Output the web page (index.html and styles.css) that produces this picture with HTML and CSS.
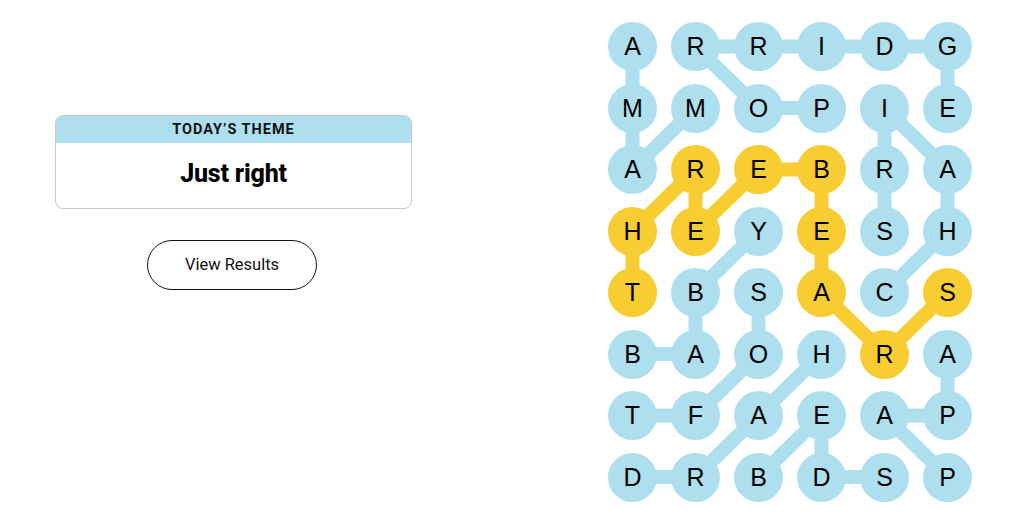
FILE: index.html
```html
<!DOCTYPE html>
<html lang="en">
<head>
<meta charset="utf-8">
<title>Strands</title>
<link rel="stylesheet" href="styles.css">
</head>
<body>
<main class="page">
  <section class="info">
    <div class="theme-card">
      <div class="theme-head">TODAY’S THEME</div>
      <div class="theme-body">Just right</div>
    </div>
    <button class="results-btn" type="button">View Results</button>
  </section>
  <section class="board">
    <svg class="links" width="364" height="480" viewBox="0 0 364 480" aria-hidden="true">
      <g class="blue" stroke="#aedfee" stroke-width="14" stroke-linecap="round">
        <!-- MAMA -->
        <line x1="87.5" y1="86" x2="24.5" y2="147.5"/>
        <line x1="24.5" y1="147.5" x2="24.5" y2="86"/>
        <line x1="24.5" y1="86" x2="24.5" y2="24.5"/>
        <!-- PORRIDGE -->
        <line x1="213.5" y1="86" x2="150.5" y2="86"/>
        <line x1="150.5" y1="86" x2="87.5" y2="24.5"/>
        <line x1="87.5" y1="24.5" x2="339.5" y2="24.5"/>
        <line x1="339.5" y1="24.5" x2="339.5" y2="86"/>
        <!-- CHAIRS -->
        <line x1="276.5" y1="270.5" x2="339.5" y2="209"/>
        <line x1="339.5" y1="209" x2="339.5" y2="147.5"/>
        <line x1="339.5" y1="147.5" x2="276.5" y2="86"/>
        <line x1="276.5" y1="86" x2="276.5" y2="209"/>
        <!-- BABY -->
        <line x1="24.5" y1="332" x2="87.5" y2="332"/>
        <line x1="87.5" y1="332" x2="87.5" y2="270.5"/>
        <line x1="87.5" y1="270.5" x2="150.5" y2="209"/>
        <!-- SOFT -->
        <line x1="150.5" y1="270.5" x2="150.5" y2="332"/>
        <line x1="150.5" y1="332" x2="87.5" y2="393.5"/>
        <line x1="87.5" y1="393.5" x2="24.5" y2="393.5"/>
        <!-- HARD -->
        <line x1="213.5" y1="332" x2="150.5" y2="393.5"/>
        <line x1="150.5" y1="393.5" x2="87.5" y2="455"/>
        <line x1="87.5" y1="455" x2="24.5" y2="455"/>
        <!-- BEDS -->
        <line x1="150.5" y1="455" x2="213.5" y2="393.5"/>
        <line x1="213.5" y1="393.5" x2="213.5" y2="455"/>
        <line x1="213.5" y1="455" x2="276.5" y2="455"/>
        <!-- PAPA -->
        <line x1="339.5" y1="455" x2="276.5" y2="393.5"/>
        <line x1="276.5" y1="393.5" x2="339.5" y2="393.5"/>
        <line x1="339.5" y1="393.5" x2="339.5" y2="332"/>
      </g>
      <g class="yellow" stroke="#f8cd32" stroke-width="14" stroke-linecap="round">
        <!-- THREEBEARS -->
        <line x1="24.5" y1="270.5" x2="24.5" y2="209"/>
        <line x1="24.5" y1="209" x2="87.5" y2="147.5"/>
        <line x1="87.5" y1="147.5" x2="87.5" y2="209"/>
        <line x1="87.5" y1="209" x2="150.5" y2="147.5"/>
        <line x1="150.5" y1="147.5" x2="213.5" y2="147.5"/>
        <line x1="213.5" y1="147.5" x2="213.5" y2="270.5"/>
        <line x1="213.5" y1="270.5" x2="276.5" y2="332"/>
        <line x1="276.5" y1="332" x2="339.5" y2="270.5"/>
      </g>
    </svg>
    <div class="grid">
      <span class="cell found">A</span><span class="cell found">R</span><span class="cell found">R</span><span class="cell found">I</span><span class="cell found">D</span><span class="cell found">G</span>
      <span class="cell found">M</span><span class="cell found">M</span><span class="cell found">O</span><span class="cell found">P</span><span class="cell found">I</span><span class="cell found">E</span>
      <span class="cell found">A</span><span class="cell span">R</span><span class="cell span">E</span><span class="cell span">B</span><span class="cell found">R</span><span class="cell found">A</span>
      <span class="cell span">H</span><span class="cell span">E</span><span class="cell found">Y</span><span class="cell span">E</span><span class="cell found">S</span><span class="cell found">H</span>
      <span class="cell span">T</span><span class="cell found">B</span><span class="cell found">S</span><span class="cell span">A</span><span class="cell found">C</span><span class="cell span">S</span>
      <span class="cell found">B</span><span class="cell found">A</span><span class="cell found">O</span><span class="cell found">H</span><span class="cell span">R</span><span class="cell found">A</span>
      <span class="cell found">T</span><span class="cell found">F</span><span class="cell found">A</span><span class="cell found">E</span><span class="cell found">A</span><span class="cell found">P</span>
      <span class="cell found">D</span><span class="cell found">R</span><span class="cell found">B</span><span class="cell found">D</span><span class="cell found">S</span><span class="cell found">P</span>
    </div>
  </section>
</main>
</body>
</html>
```
FILE: styles.css
```css
* { box-sizing: border-box; }

html, body {
  margin: 0;
  padding: 0;
  background: #ffffff;
  color: #000000;
  font-family: Roboto, "Liberation Sans", Arial, sans-serif;
}

.page {
  display: flex;
  align-items: flex-start;
  gap: 196px;
  padding-left: 55px;
  width: 1024px;
  height: 532px;
  overflow: hidden;
}

.info {
  width: 357px;
  padding-top: 115px;
  display: flex;
  flex-direction: column;
  align-items: center;
}

.theme-card {
  width: 357px;
  border: 1px solid #c9c9c9;
  border-radius: 8px;
  overflow: hidden;
}

.theme-head {
  height: 27px;
  background: #aedfee;
  display: flex;
  align-items: center;
  justify-content: center;
  font-size: 14.5px;
  font-weight: 700;
  letter-spacing: 1px;
  color: #121212;
}

.theme-body {
  height: 65px;
  display: flex;
  align-items: center;
  justify-content: center;
  font-size: 25px;
  font-weight: 800;
  letter-spacing: -0.2px;
  padding-bottom: 4px;
}

.results-btn {
  margin-top: 31px;
  margin-right: 3px;
  width: 170px;
  height: 50px;
  border: 1px solid #121212;
  border-radius: 25px;
  background: #ffffff;
  font-family: Roboto, "Liberation Sans", Arial, sans-serif;
  font-size: 16.5px;
  color: #121212;
  padding: 0 0 2px;
}

.board {
  position: relative;
  margin-top: 22px;
  width: 364px;
  height: 480px;
}

.links {
  position: absolute;
  left: 0;
  top: 0;
}

.grid {
  position: relative;
  display: grid;
  grid-template-columns: repeat(6, 49px);
  grid-auto-rows: 49px;
  column-gap: 14px;
  row-gap: 12.5px;
}

.cell {
  width: 49px;
  height: 49px;
  border-radius: 50%;
  display: flex;
  align-items: center;
  justify-content: center;
  font-family: "Liberation Sans", Arial, sans-serif;
  font-size: 25px;
  color: #000000;
}

.cell.found { background: #aedfee; }
.cell.span { background: #f8cd32; }
```
